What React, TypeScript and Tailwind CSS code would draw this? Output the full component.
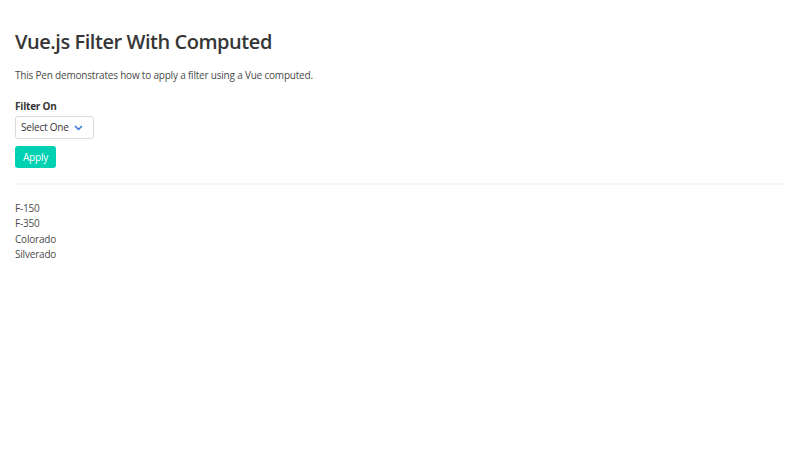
import React, {useState} from "react";

const cars = ["F-150", "F-350", "Colorado", "Silverado"];

const App = () => {
  const [filter, setFilter] = useState("");

  return (
    <div
      className="min-h-[450px] w-full bg-white px-[15px] pt-[30px] text-[#4a4a4a] tracking-[-0.2px]"
      style={{fontFamily: '"Open Sans", "Noto Sans", sans-serif'}}
    >
      <h1 className="text-[20px] leading-[24px] font-semibold text-[#363636] tracking-[-0.45px]">
        Vue.js Filter With Computed
      </h1>
      <p className="mt-[13px] text-[10px] leading-[16px]">
        This Pen demonstrates how to apply a filter using a Vue computed.
      </p>

      <div className="mt-[15px]">
        <label className="block text-[10px] leading-[16px] font-bold text-[#363636]">
          Filter On
        </label>
        <div className="relative mt-[2px] flex h-[23px] w-[79px]">
          <select
            value={filter}
            onChange={(e) => setFilter(e.target.value)}
            className="h-[23px] w-full appearance-none rounded-[3px] border border-[#dbdbdb] bg-white pl-[5px] pr-[20px] text-[10px] text-[#363636] outline-none"
          >
            <option value="">Select One</option>
            <option value="Ford">Ford</option>
            <option value="Chevy">Chevy</option>
          </select>
          <svg
            className="pointer-events-none absolute right-[11px] top-[9px]"
            width="9"
            height="6"
            viewBox="0 0 9 6"
          >
            <path d="M1 1l3.5 3.5L8 1" fill="none" stroke="#3273dc" strokeWidth="1.5" />
          </svg>
        </div>
        <button className="mt-[7px] h-[22px] rounded-[3px] bg-[#00d1b2] px-[8px] text-[10px] text-white">
          Apply
        </button>
      </div>

      <hr className="mt-[15px] h-[2px] border-0 bg-[#f5f5f5]" />

      <ul className="mt-[16px] text-[10px] leading-[15.4px]">
        {cars.map((car) => (
          <li key={car}>{car}</li>
        ))}
      </ul>
    </div>
  );
};

export default App;
